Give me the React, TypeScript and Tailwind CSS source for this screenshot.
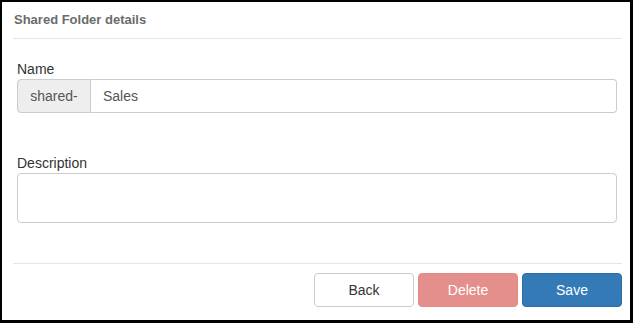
export default function App() {
  return (
    <div className="w-[633px] h-[323px] bg-white border-black border-l-2 border-t-2 border-r-[3px] border-b-[3px] font-['Liberation_Sans',Arial,sans-serif] text-[14px] text-[#333] flex flex-col pl-[11px] pr-[8px]">
      <div className="h-[37px] border-b border-[#e5e5e5] flex items-center pl-[1px]">
        <h3 className="text-[13px] font-bold text-[#6b6b6b]">Shared Folder details</h3>
      </div>

      <div className="pl-[4px] pr-[5px] pt-[20px] flex flex-col">
        <label className="leading-[20px]">Name</label>
        <div className="flex h-[34px]">
          <span className="w-[74px] flex items-center justify-center bg-[#eee] border border-[#ccc] rounded-l-[4px] text-[#555]">
            shared-
          </span>
          <input
            className="flex-1 border border-l-0 border-[#ccc] rounded-r-[4px] px-[12px] text-[#555] outline-none"
            defaultValue="Sales"
          />
        </div>

        <label className="leading-[20px] mt-[40px]">Description</label>
        <textarea className="h-[50px] border border-[#ccc] rounded-[4px] px-[12px] py-[6px] resize-none outline-none" />
      </div>

      <div className="mt-[40px] border-t border-[#e5e5e5] pt-[9px] flex justify-end gap-[4px]">
        <button className="w-[100px] h-[34px] border border-[#ccc] rounded-[4px] bg-white text-[#333]">Back</button>
        <button className="w-[100px] h-[34px] border border-[#e38985] rounded-[4px] bg-[#e58f8c] text-white">Delete</button>
        <button className="w-[100px] h-[34px] border border-[#2e6da4] rounded-[4px] bg-[#337ab7] text-white">Save</button>
      </div>
    </div>
  );
}
